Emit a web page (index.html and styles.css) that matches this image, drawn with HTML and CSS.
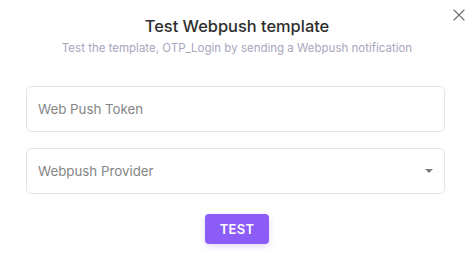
FILE: index.html
```html
<!DOCTYPE html>
<html>
<head>
<meta charset="utf-8">
<link rel="stylesheet" href="styles.css">
</head>
<body>
<div class="dialog">
  <button class="close" aria-label="Close">
    <svg width="12" height="12" viewBox="0 0 12 12"><path d="M1 1L11 11M11 1L1 11" stroke="#737373" stroke-width="1.2" fill="none" stroke-linecap="round"/></svg>
  </button>
  <div class="header">
    <h1 class="title">Test Webpush template</h1>
    <p class="subtitle">Test the template, OTP_Login by sending a Webpush notification</p>
  </div>
  <div class="form">
    <div class="field">
      <span class="placeholder">Web Push Token</span>
    </div>
    <div class="field select">
      <span class="placeholder">Webpush Provider</span>
      <svg class="caret" width="8" height="4" viewBox="0 0 8 4"><path d="M0 0H8L4 4Z" fill="#7a7a7a"/></svg>
    </div>
  </div>
  <div class="actions">
    <button class="btn">TEST</button>
  </div>
</div>
</body>
</html>
```

FILE: styles.css
```css
html, body {
  margin: 0;
  padding: 0;
  background: #ffffff;
}
body {
  font-family: Inter, "Noto Sans", sans-serif;
  width: 474px;
  height: 257px;
  overflow: hidden;
}
.dialog {
  position: relative;
  padding: 15px 29px 0 26px;
}
.close {
  position: absolute;
  top: 8px;
  right: 8px;
  width: 14px;
  height: 14px;
  padding: 0;
  border: none;
  background: none;
  display: flex;
  align-items: center;
  justify-content: center;
}
.header {
  text-align: center;
  padding-left: 3px;
}
.title {
  margin: 0;
  font-size: 16.4px;
  font-weight: 500;
  color: #2e2e2e;
  line-height: 22px;
}
.subtitle {
  margin: 3px 0 0;
  font-size: 11.5px;
  color: #a8a6bd;
  line-height: 16px;
}
.form {
  margin-top: 30px;
  display: flex;
  flex-direction: column;
  gap: 16px;
}
.field {
  height: 44px;
  border: 1px solid #e4e4e8;
  border-radius: 5px;
  display: flex;
  align-items: center;
  padding: 0 11px;
  box-sizing: content-box;
}
.placeholder {
  font-size: 13.3px;
  color: #858585;
}
.select {
  justify-content: space-between;
}
.caret {
  margin-right: 0;
}
.actions {
  display: flex;
  justify-content: center;
  margin-top: 20px;
  padding-left: 3px;
}
.btn {
  width: 64px;
  height: 30px;
  border: none;
  border-radius: 4px;
  background: #8b5cf6;
  color: #ffffff;
  font-family: Inter, "Noto Sans", sans-serif;
  font-size: 13px;
  font-weight: 600;
  letter-spacing: 0.3px;
  box-shadow: 0 2px 6px rgba(139, 92, 246, 0.25);
}
```
